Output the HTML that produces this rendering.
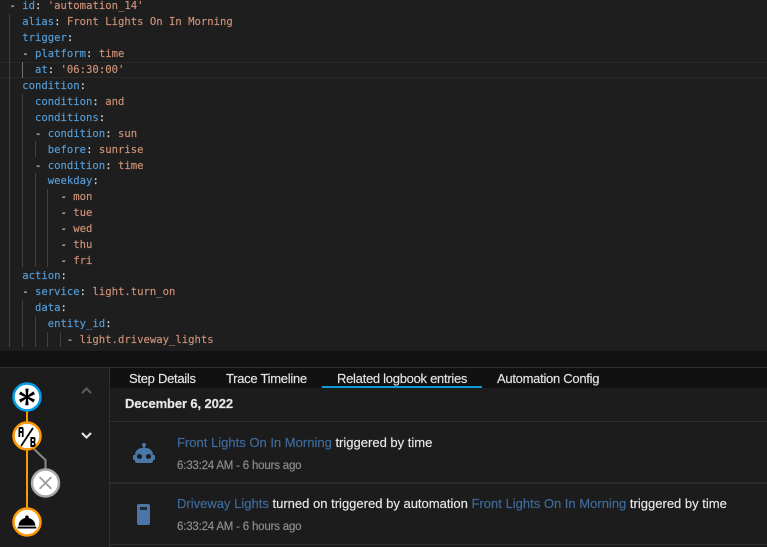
<!DOCTYPE html>
<html><head><meta charset="utf-8">
<style>
html,body{margin:0;padding:0;background:#1c1c1c}
#r{position:relative;width:767px;height:547px;overflow:hidden;background:#1c1c1c;font-family:"Liberation Sans",sans-serif}
.a{position:absolute}
.c{position:absolute;left:9.5px;font:10.6px/16px "DejaVu Sans Mono",monospace;white-space:pre;color:#d4d4d4;-webkit-text-stroke:.15px currentColor;margin-top:1px}
.k{color:#569cd6}.s{color:#ce9178}
.g{position:absolute;width:1px;background:#404040}
.h{position:absolute;left:0;width:767px;background:#2f2f2f}
.t{position:absolute;white-space:pre;color:#e4e4e4;-webkit-text-stroke:.15px currentColor}
.tab{font-size:13px;letter-spacing:-.28px;line-height:15px;top:371px}
.l{color:#3f6b9e}
.m{color:#e8e8e8;font-size:13.03px;line-height:16px}
.d{font-size:11.5px;letter-spacing:-.2px;line-height:15px;color:#8f8f8f}
</style></head><body><div id="r">
<div class="a" style="left:0;top:0;width:767px;height:351px;background:#1e1e1e"></div>
<div class="a" style="left:0;top:62px;width:767px;height:1px;background:#282828"></div>
<div class="a" style="left:0;top:77px;width:767px;height:1px;background:#282828"></div>
<div class="g" style="left:9px;top:14px;height:333px"></div>
<div class="g" style="left:22px;top:62px;height:16px;background:#707070"></div>
<div class="g" style="left:22px;top:94px;height:173px"></div>
<div class="g" style="left:22px;top:300px;height:47px"></div>
<div class="g" style="left:35px;top:141px;height:16px"></div>
<div class="g" style="left:35px;top:173px;height:94px"></div>
<div class="g" style="left:35px;top:316px;height:31px"></div>
<div class="g" style="left:47px;top:189px;height:78px"></div>
<div class="g" style="left:47px;top:332px;height:15px"></div>
<div class="g" style="left:60px;top:332px;height:15px"></div>
<div class="c" style="top:-3px">- <span class="k">id</span>: <span class="s">'automation_14'</span></div>
<div class="c" style="top:13px">  <span class="k">alias</span>: <span class="s">Front Lights On In Morning</span></div>
<div class="c" style="top:29px">  <span class="k">trigger</span>:</div>
<div class="c" style="top:45px">  - <span class="k">platform</span>: <span class="s">time</span></div>
<div class="c" style="top:61px">    <span class="k">at</span>: <span class="s">'06:30:00'</span></div>
<div class="c" style="top:77px">  <span class="k">condition</span>:</div>
<div class="c" style="top:93px">    <span class="k">condition</span>: <span class="s">and</span></div>
<div class="c" style="top:109px">    <span class="k">conditions</span>:</div>
<div class="c" style="top:125px">    - <span class="k">condition</span>: <span class="s">sun</span></div>
<div class="c" style="top:141px">      <span class="k">before</span>: <span class="s">sunrise</span></div>
<div class="c" style="top:157px">    - <span class="k">condition</span>: <span class="s">time</span></div>
<div class="c" style="top:172px">      <span class="k">weekday</span>:</div>
<div class="c" style="top:188px">        - <span class="s">mon</span></div>
<div class="c" style="top:204px">        - <span class="s">tue</span></div>
<div class="c" style="top:220px">        - <span class="s">wed</span></div>
<div class="c" style="top:236px">        - <span class="s">thu</span></div>
<div class="c" style="top:252px">        - <span class="s">fri</span></div>
<div class="c" style="top:267px">  <span class="k">action</span>:</div>
<div class="c" style="top:283px">  - <span class="k">service</span>: <span class="s">light.turn_on</span></div>
<div class="c" style="top:299px">    <span class="k">data</span>:</div>
<div class="c" style="top:315px">      <span class="k">entity_id</span>:</div>
<div class="c" style="top:331px">         - <span class="s">light.driveway_lights</span></div>

<div class="a" style="left:0;top:351px;width:767px;height:16px;background:#121212"></div>
<div class="h" style="top:367px;height:1px"></div>
<div class="a" style="left:110px;top:368px;width:657px;height:20px;background:#111"></div>
<div class="a" style="left:109px;top:367px;width:1px;height:180px;background:#2f2f2f"></div>
<div class="t tab" style="left:129px">Step Details</div>
<div class="t tab" style="left:226px">Trace Timeline</div>
<div class="t tab" style="left:337px">Related logbook entries</div>
<div class="t tab" style="left:497px">Automation Config</div>
<div class="a" style="left:322px;top:386px;width:160px;height:2px;background:#0d9ad6"></div>
<div class="t" style="left:125px;top:396px;font-size:13px;letter-spacing:-.12px;line-height:16px;font-weight:bold;color:#e8e8e8">December 6, 2022</div>
<div class="a" style="left:110px;top:421px;width:657px;height:1px;background:#2f2f2f"></div>
<div class="a" style="left:110px;top:482px;width:657px;height:2px;background:#2b2b2b"></div>
<div class="a" style="left:110px;top:544px;width:657px;height:1px;background:#2f2f2f"></div>
<div class="t m" style="left:177px;top:435px"><span class="l">Front Lights On In Morning</span> triggered by time</div>
<div class="t d" style="left:177px;top:459px">6:33:24 AM - 6 hours ago</div>
<div class="t m" style="left:177px;top:496px"><span class="l">Driveway Lights</span> turned on triggered by automation <span class="l">Front Lights On In Morning</span> triggered by time</div>
<div class="t d" style="left:177px;top:520px">6:33:24 AM - 6 hours ago</div>

<svg class="a" style="left:0;top:0" width="767" height="547" viewBox="0 0 767 547">
<path d="M27 397V522" stroke="#ff9800" stroke-width="2" fill="none"/>
<path d="M34 449L45.5 460V470" stroke="#8a8a8a" stroke-width="2" fill="none"/>
<circle cx="27" cy="397" r="13.5" fill="#fff" stroke="#039be5" stroke-width="2.5"/>
<circle cx="27" cy="436" r="13.5" fill="#fff" stroke="#ff9800" stroke-width="2.5"/>
<circle cx="45.5" cy="483" r="13.5" fill="#fff" stroke="#a8a8a8" stroke-width="2.5"/>
<circle cx="27" cy="522" r="13.5" fill="#fff" stroke="#ff9800" stroke-width="2.5"/>
<g transform="translate(17,387) scale(.83)"><path fill="#000" d="M10,2H14L13.21,9.91L19.66,5.27L21.66,8.73L14.42,12L21.66,15.27L19.66,18.73L13.21,14.09L14,22H10L10.79,14.09L4.34,18.73L2.34,15.27L9.58,12L2.34,8.73L4.34,5.27L10.79,9.91L10,2Z"/></g>
<g transform="translate(16.8,425) scale(.85,1)"><path fill="#000" d="M4 2A2 2 0 0 0 2 4V12H4V8H6V12H8V4A2 2 0 0 0 6 2H4M4 4H6V6H4M22 15.5V14A2 2 0 0 0 20 12H16V22H20A2 2 0 0 0 22 20V18.5A1.54 1.54 0 0 0 20.5 17A1.54 1.54 0 0 0 22 15.5M20 20H18V18H20V20M20 16H18V14H20M5.79 21.61L4.21 20.39L18.21 2.39L19.79 3.61Z"/></g>
<g transform="translate(34.3,471.8) scale(.93)"><path fill="#9e9e9e" d="M19,6.41L17.59,5L12,10.59L6.41,5L5,6.41L10.59,12L5,17.59L6.41,19L12,13.41L17.59,19L19,17.59L13.41,12L19,6.41Z"/></g>
<g transform="translate(15.8,510.8) scale(.93)"><path fill="#000" d="M12,5A2,2 0 0,1 14,7C14,7.24 13.96,7.47 13.88,7.69C17.95,8.5 21,11.91 21,16H3C3,11.91 6.05,8.5 10.12,7.69C10.04,7.47 10,7.24 10,7A2,2 0 0,1 12,5M22,19H2V17H22V19Z"/></g>
<path d="M82 393L86.5 388.5L91 393" stroke="#5c5c5c" stroke-width="2.2" fill="none"/>
<path d="M82 433L86.5 437.5L91 433" stroke="#e0e0e0" stroke-width="2.2" fill="none"/>
<g transform="translate(132,441)"><path fill="#4a76a8" d="M12,2A2,2 0 0,1 14,4C14,4.74 13.6,5.39 13,5.73V7H14A7,7 0 0,1 21,14H22A1,1 0 0,1 23,15V18A1,1 0 0,1 22,19H21V20A2,2 0 0,1 19,22H5A2,2 0 0,1 3,20V19H2A1,1 0 0,1 1,18V15A1,1 0 0,1 2,14H3A7,7 0 0,1 10,7H11V5.73C10.4,5.39 10,4.74 10,4A2,2 0 0,1 12,2M7.5,13A2.5,2.5 0 0,0 5,15.5A2.5,2.5 0 0,0 7.5,18A2.5,2.5 0 0,0 10,15.5A2.5,2.5 0 0,0 7.5,13M16.5,13A2.5,2.5 0 0,0 14,15.5A2.5,2.5 0 0,0 16.5,18A2.5,2.5 0 0,0 19,15.5A2.5,2.5 0 0,0 16.5,13Z"/></g>
<rect x="137" y="504" width="13" height="21" rx="2" fill="#4a76a8"/>
<rect x="140" y="507" width="7" height="3" fill="#1c2a3a"/>
</svg>
</div></body></html>
